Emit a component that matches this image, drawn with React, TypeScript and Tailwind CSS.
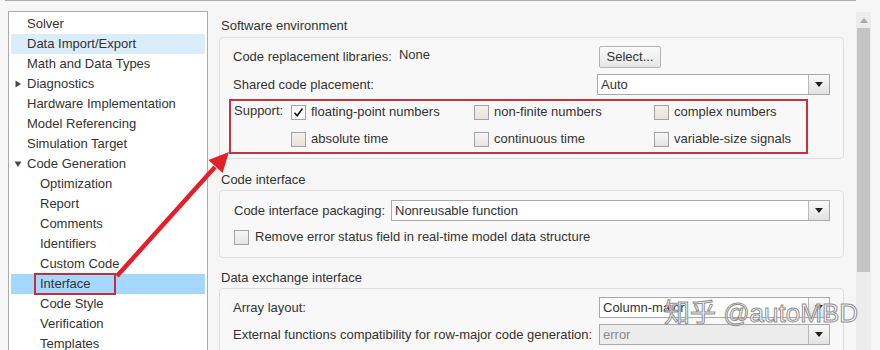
import React from "react";

const font = { fontFamily: '"Liberation Sans", Arial, sans-serif' };

function Tri({ down }: { down?: boolean }) {
  return (
    <svg width="8" height="8" viewBox="0 0 8 8" className="absolute left-[3px] top-[6px]">
      {down ? <polygon points="0.5,1.5 7.5,1.5 4,7" fill="#4a4a4a" /> : <polygon points="1.5,0.5 7,4 1.5,7.5" fill="#4a4a4a" />}
    </svg>
  );
}

function TreeItem({ label, level, bg, tri }: { label: string; level: number; bg?: string; tri?: "right" | "down" }) {
  return (
    <div className={`relative h-5 leading-5 ${bg ?? ""} ${level === 0 ? "pl-[16px]" : "pl-[29px]"}`}>
      {tri && <Tri down={tri === "down"} />}
      {label}
    </div>
  );
}

function Box({ checked, beige }: { checked?: boolean; beige?: boolean }) {
  return (
    <div
      className={`w-[15px] h-[15px] border border-[#a3a3a3] shrink-0 flex items-center justify-center ${
        checked ? "bg-white" : beige ? "bg-gradient-to-b from-[#f6f0ea] to-[#e9e1d9]" : "bg-gradient-to-b from-[#f7f7f7] to-[#e4e4e4]"
      }`}
    >
      {checked && (
        <svg width="11" height="11" viewBox="0 0 11 11">
          <path d="M1.5 5.8 L4.2 8.8 L9.5 1.5" fill="none" stroke="#111" strokeWidth="1.6" />
        </svg>
      )}
    </div>
  );
}

function Arrow() {
  return (
    <div className="w-[21px] h-full border-l border-[#b8b8b8] bg-gradient-to-b from-[#fafafa] to-[#e2e2e2] flex items-center justify-center shrink-0">
      <svg width="8" height="5" viewBox="0 0 8 5">
        <polygon points="0,0 8,0 4,5" fill="#222" />
      </svg>
    </div>
  );
}

function Dropdown({ value, w, disabled }: { value: string; w: string; disabled?: boolean }) {
  return (
    <div className={`${w} h-[21px] border border-[#a9a9a9] flex items-stretch ${disabled ? "bg-[#ececec] text-[#8a8a8a]" : "bg-white"}`}>
      <div className="flex-1 pl-[3px] leading-[19px] overflow-hidden whitespace-nowrap">{value}</div>
      <Arrow />
    </div>
  );
}

function Cb({ label, checked, beige }: { label: string; checked?: boolean; beige?: boolean }) {
  return (
    <div className="flex items-center gap-[5px] h-5">
      <Box checked={checked} beige={beige} />
      <span>{label}</span>
    </div>
  );
}

export default function App() {
  return (
    <div className="relative w-[880px] h-[350px] overflow-hidden bg-[#f6f6f6] text-[13px] text-[#333]" style={font}>
      <div className="ml-[5px] w-[851px] h-px bg-[#ababab]" />
      <div className="flex mt-[10px]">
        {/* Tree */}
        <div className="ml-[8px] w-[200px] h-[350px] border border-[#acacac] bg-white px-[2px] pt-[2px] shrink-0">
          <TreeItem label="Solver" level={0} />
          <TreeItem label="Data Import/Export" level={0} bg="bg-[#dbecfa]" />
          <TreeItem label="Math and Data Types" level={0} />
          <TreeItem label="Diagnostics" level={0} tri="right" />
          <TreeItem label="Hardware Implementation" level={0} />
          <TreeItem label="Model Referencing" level={0} />
          <TreeItem label="Simulation Target" level={0} />
          <TreeItem label="Code Generation" level={0} tri="down" />
          <TreeItem label="Optimization" level={1} />
          <TreeItem label="Report" level={1} />
          <TreeItem label="Comments" level={1} />
          <TreeItem label="Identifiers" level={1} />
          <TreeItem label="Custom Code" level={1} />
          <TreeItem label="Interface" level={1} bg="bg-[#a6d7fc]" />
          <TreeItem label="Code Style" level={1} />
          <TreeItem label="Verification" level={1} />
          <TreeItem label="Templates" level={1} />
        </div>

        {/* Right content */}
        <div className="ml-[11px] w-[625px] shrink-0">
          <div className="pl-[2px] pt-[7px] pb-[3px] leading-4">Software environment</div>
          <div className="h-[122px] border border-[#dedede] rounded-[4px] bg-[#f8f8f8] pt-[8px]">
            <div className="flex items-center h-[22px] pl-[13px]">
              <div className="w-[364px] flex">
                <span>Code replacement libraries:</span>
                <span className="ml-[7px] -mt-[2px]">None</span>
              </div>
              <div className="ml-[2px] w-[62px] h-[22px] border border-[#b4b4b4] rounded-[2px] bg-gradient-to-b from-[#fbfbfb] to-[#e6e6e6] flex items-center justify-center">
                Select...
              </div>
            </div>
            <div className="flex items-center h-[21px] mt-[6px] pl-[13px]">
              <div className="w-[364px]">Shared code placement:</div>
              <Dropdown value="Auto" w="w-[233px]" />
            </div>
            <div className="ml-[9px] mt-[4px] w-[579px] h-[55px] border-2 border-[#c8323f] pt-[1px] pl-[3px]">
              <div className="grid grid-cols-[57px_183px_180px_1fr] grid-rows-[20px_20px] gap-y-[7px]">
                <div className="leading-5 -mt-[1px]">Support:</div>
                <Cb label="floating-point numbers" checked />
                <Cb label="non-finite numbers" beige />
                <Cb label="complex numbers" beige />
                <div />
                <Cb label="absolute time" beige />
                <Cb label="continuous time" />
                <Cb label="variable-size signals" />
              </div>
            </div>
          </div>

          <div className="pl-[2px] pt-[13px] pb-[2px] leading-4">Code interface</div>
          <div className="h-[68px] border border-[#dedede] rounded-[4px] bg-[#f8f8f8] pt-[9px] pl-[14px]">
            <div className="flex items-center h-[21px]">
              <div className="w-[157px]">Code interface packaging:</div>
              <Dropdown value="Nonreusable function" w="w-[439px]" />
            </div>
            <div className="flex items-center gap-[6px] h-5 mt-[6px]">
              <Box />
              <span>Remove error status field in real-time model data structure</span>
            </div>
          </div>

          <div className="pl-[2px] pt-[12px] pb-[2px] leading-4">Data exchange interface</div>
          <div className="h-[80px] border border-[#dedede] rounded-[4px] bg-[#f8f8f8] pt-[8px] pl-[13px]">
            <div className="flex items-center h-[21px]">
              <div className="w-[366px]">Array layout:</div>
              <Dropdown value="Column-major" w="w-[231px]" />
            </div>
            <div className="flex items-center h-[21px] mt-[6px]">
              <div className="w-[366px] whitespace-nowrap">External functions compatibility for row-major code generation:</div>
              <Dropdown value="error" w="w-[231px]" disabled />
            </div>
          </div>
        </div>

        {/* Scrollbar */}
        <div className="ml-[12px] mt-px w-[15px] h-[340px] bg-[#ececec] flex flex-col items-center shrink-0">
          <svg width="8" height="5" viewBox="0 0 8 5" className="mt-[6px]">
            <polygon points="0,5 8,5 4,0" fill="#a8a8a8" />
          </svg>
          <div className="mt-[5px] w-[13px] h-[244px] bg-[#c4c4c4]" />
        </div>
      </div>

      {/* Interface highlight box */}
      <div className="absolute left-[34px] top-[273px] w-[82px] h-[22px] border-2 border-[#bf2f3d]" />

      {/* Red arrow */}
      <svg className="absolute left-0 top-0 pointer-events-none" width="880" height="350">
        <line x1="117" y1="276" x2="215" y2="167" stroke="#e3202a" strokeWidth="4.5" />
        <polygon points="229,152 222.5,173 208.5,160" fill="#e3202a" />
      </svg>

      {/* Watermark */}
      <div
        className="absolute left-[664px] top-[297px] text-[26px] leading-[32px] text-white/70 [-webkit-text-stroke:1px_#909090] whitespace-nowrap"
        style={{ fontFamily: '"Liberation Sans", "Noto Sans CJK SC", sans-serif' }}
      >
        知乎 @autoMBD
      </div>
    </div>
  );
}
